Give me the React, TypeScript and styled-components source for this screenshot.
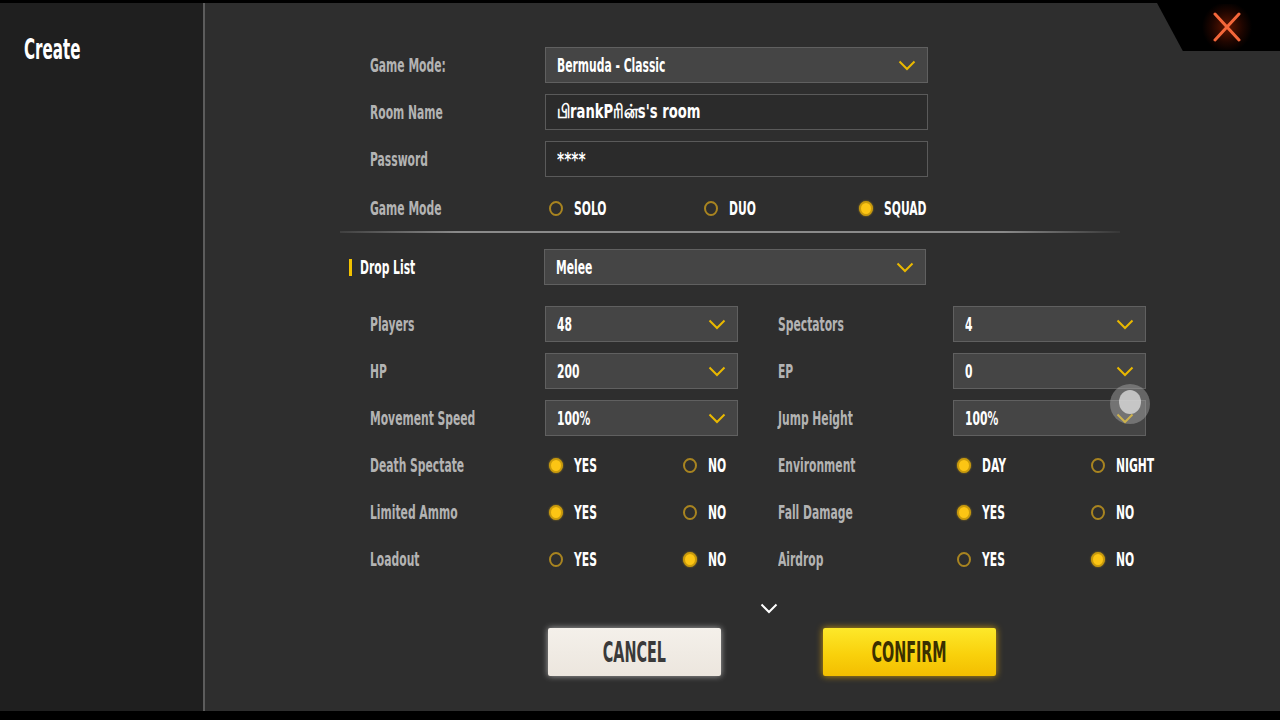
import React from "react";
import styled, { createGlobalStyle } from "styled-components";

const GlobalStyle = createGlobalStyle`
  html, body {
    margin: 0;
    padding: 0;
    background: #000;
  }
  body {
    font-family: "Liberation Sans Narrow", "DejaVu Sans Condensed", "Roboto Condensed", sans-serif;
    font-stretch: condensed;
  }
`;

// the game font is very narrow, squeeze the text horizontally
const Squeeze = styled.span<{ $scale?: number; $origin?: string }>`
  display: inline-block;
  white-space: nowrap;
  transform: scaleX(${(p) => p.$scale ?? 0.63});
  transform-origin: ${(p) => p.$origin ?? "left"} center;
`;

const Screen = styled.div`
  width: 1280px;
  height: 720px;
  box-sizing: border-box;
  padding: 3px 0 9px;
  background: #000;
  display: flex;
`;

const SideBar = styled.aside`
  width: 205px;
  flex-shrink: 0;
  background: #1f1f1f;
  border-right: 2px solid #5c5c5c;
  padding: 31px 0 0 24px;
  box-sizing: border-box;
`;

const Title = styled.h1`
  margin: 0;
  font-size: 28px;
  font-weight: 700;
  color: #fff;
  line-height: 32px;
`;

const Main = styled.main`
  position: relative;
  flex: 1;
  background: #2e2e2e;
  overflow: hidden;
`;

const Form = styled.div`
  display: flex;
  flex-direction: column;
  padding: 44px 0 0 165px;
`;

const TopStack = styled.div`
  display: flex;
  flex-direction: column;
  gap: 11px;
`;

const Row = styled.div<{ $offset?: number }>`
  display: flex;
  align-items: center;
  height: 36px;
  margin-top: ${(p) => p.$offset ?? 0}px;
`;

const Label = styled.div`
  width: 175px;
  flex-shrink: 0;
  font-size: 19px;
  font-weight: 700;
  color: #b3b3b3;
  white-space: nowrap;
`;

const DropLabel = styled.div`
  display: flex;
  align-items: center;
  gap: 8px;
  width: 195px;
  margin-left: -21px;
  font-size: 19px;
  font-weight: 700;
  color: #fff;
`;

const Marker = styled.span`
  width: 3px;
  height: 17px;
  background: #f2c200;
`;

const SelectBox = styled.div<{ $width: number }>`
  width: ${(p) => p.$width}px;
  height: 36px;
  box-sizing: border-box;
  display: flex;
  align-items: center;
  justify-content: space-between;
  padding: 0 11px;
  background: #454545;
  border: 1px solid #606060;
  color: #fff;
  font-size: 19px;
  font-weight: 700;
`;

const InputBox = styled.div`
  width: 383px;
  height: 36px;
  box-sizing: border-box;
  display: flex;
  align-items: center;
  padding: 0 11px;
  background: #2b2b2b;
  border: 1px solid #5a5a5a;
  color: #fff;
  font-size: 19px;
  font-weight: 700;
`;

const Divider = styled.div`
  width: 780px;
  height: 2px;
  margin: 5px 0 0 -30px;
  background: linear-gradient(
    90deg,
    rgba(90, 90, 90, 0.4),
    #8a8a8a 15%,
    #8a8a8a 85%,
    rgba(90, 90, 90, 0.2)
  );
`;

const Grid = styled.div`
  display: grid;
  grid-template-columns: 175px 193px 215px 193px;
  grid-auto-rows: 36px;
  row-gap: 11px;
  align-items: center;
  margin-top: 21px;
`;

const GridLabel = styled(Label)<{ $right?: boolean }>`
  width: auto;
  padding-left: ${(p) => (p.$right ? 40 : 0)}px;
`;

const Options = styled.div<{ $step: number }>`
  display: grid;
  grid-template-columns: repeat(3, ${(p) => p.$step}px);
  padding-left: 4px;
`;

const Option = styled.div`
  display: flex;
  align-items: center;
  gap: 11px;
  color: #fff;
  font-size: 19px;
  font-weight: 700;
`;

const Radio = styled.span<{ $on?: boolean }>`
  width: 14px;
  height: 15px;
  flex-shrink: 0;
  box-sizing: border-box;
  border-radius: 50%;
  border: 2px solid ${(p) => (p.$on ? "#c99a0c" : "#a88420")};
  background: ${(p) => (p.$on ? "#fcc514" : "transparent")};
  box-shadow: ${(p) => (p.$on ? "0 0 2px rgba(255, 200, 20, 0.6)" : "none")};
`;

const Footer = styled.div`
  width: 448px;
  margin: 26px 0 0 178px;
  display: flex;
  flex-direction: column;
  align-items: center;
  gap: 14px;
`;

const ScrollHint = styled.div`
  display: flex;
  margin-right: 6px;
`;

const Buttons = styled.div`
  width: 100%;
  display: flex;
  justify-content: space-between;
`;

const ActionButton = styled.button<{ $primary?: boolean }>`
  width: 173px;
  height: 48px;
  padding: 0;
  border: none;
  border-radius: 2px;
  font-family: inherit;
  font-stretch: condensed;
  font-size: 28px;
  font-weight: 700;
  color: ${(p) => (p.$primary ? "#3b3000" : "#3a3a3a")};
  background: ${(p) =>
    p.$primary
      ? "linear-gradient(180deg, #fde82a 0%, #f9d10c 55%, #f3be00 100%)"
      : "linear-gradient(180deg, #f4f0ea 0%, #ece6de 100%)"};
  box-shadow: ${(p) =>
    p.$primary
      ? "0 0 7px rgba(255, 190, 0, 0.75)"
      : "0 0 6px rgba(255, 255, 255, 0.6)"};
`;

const CloseArea = styled.div`
  position: absolute;
  top: 0;
  right: 0;
  width: 123px;
  height: 48px;
  background: #000;
  clip-path: polygon(0 0, 100% 0, 100% 100%, 21% 100%);
  display: flex;
  align-items: center;
  justify-content: flex-end;
  padding-right: 27px;
  box-sizing: border-box;
`;

const CloseGlow = styled.div`
  width: 52px;
  height: 46px;
  display: flex;
  align-items: center;
  justify-content: center;
  background: radial-gradient(circle, rgba(160, 35, 0, 0.6) 0%, rgba(100, 18, 0, 0.3) 45%, transparent 72%);
`;

const TouchMark = styled.div`
  position: absolute;
  left: 905px;
  top: 381px;
  width: 40px;
  height: 40px;
  border-radius: 50%;
  background: rgba(170, 170, 170, 0.45);
  display: flex;
  align-items: flex-start;
  justify-content: center;
  padding-top: 6px;
  box-sizing: border-box;
  &::after {
    content: "";
    width: 22px;
    height: 24px;
    border-radius: 50%;
    background: rgba(225, 225, 225, 0.75);
  }
`;

const Chevron = ({ color = "#e9b800" }: { color?: string }) => (
  <svg width="18" height="11" viewBox="0 0 18 11">
    <polyline points="1.5,1.5 9,9 16.5,1.5" fill="none" stroke={color} strokeWidth="2" />
  </svg>
);

const Select = ({ value, width }: { value: string; width: number }) => (
  <SelectBox $width={width}>
    <Squeeze>{value}</Squeeze>
    <Chevron />
  </SelectBox>
);

const RadioGroup = ({
  items,
  selected,
  step,
}: {
  items: string[];
  selected: number;
  step: number;
}) => (
  <Options $step={step}>
    {items.map((item, i) => (
      <Option key={item}>
        <Radio $on={i === selected} />
        <Squeeze>{item}</Squeeze>
      </Option>
    ))}
  </Options>
);

type Cell =
  | { label: string; select: string }
  | { label: string; options: string[]; selected: number };

const gridRows: [Cell, Cell][] = [
  [
    { label: "Players", select: "48" },
    { label: "Spectators", select: "4" },
  ],
  [
    { label: "HP", select: "200" },
    { label: "EP", select: "0" },
  ],
  [
    { label: "Movement Speed", select: "100%" },
    { label: "Jump Height", select: "100%" },
  ],
  [
    { label: "Death Spectate", options: ["YES", "NO"], selected: 0 },
    { label: "Environment", options: ["DAY", "NIGHT"], selected: 0 },
  ],
  [
    { label: "Limited Ammo", options: ["YES", "NO"], selected: 0 },
    { label: "Fall Damage", options: ["YES", "NO"], selected: 0 },
  ],
  [
    { label: "Loadout", options: ["YES", "NO"], selected: 1 },
    { label: "Airdrop", options: ["YES", "NO"], selected: 1 },
  ],
];

const renderControl = (cell: Cell) =>
  "select" in cell ? (
    <Select value={cell.select} width={193} />
  ) : (
    <RadioGroup items={cell.options} selected={cell.selected} step={134} />
  );

const App = () => {
  return (
    <>
      <GlobalStyle />
      <Screen>
        <SideBar>
          <Title>
            <Squeeze $scale={0.6}>Create</Squeeze>
          </Title>
        </SideBar>
        <Main>
          <Form>
            <TopStack>
              <Row>
                <Label>
                  <Squeeze>Game Mode:</Squeeze>
                </Label>
                <Select value="Bermuda - Classic" width={383} />
              </Row>
              <Row>
                <Label>
                  <Squeeze>Room Name</Squeeze>
                </Label>
                <InputBox>
                  <Squeeze $scale={0.77}>பிrankPரின்s's room</Squeeze>
                </InputBox>
              </Row>
              <Row>
                <Label>
                  <Squeeze>Password</Squeeze>
                </Label>
                <InputBox>
                  <Squeeze $scale={0.8}>****</Squeeze>
                </InputBox>
              </Row>
              <Row $offset={2}>
                <Label>
                  <Squeeze>Game Mode</Squeeze>
                </Label>
                <RadioGroup items={["SOLO", "DUO", "SQUAD"]} selected={2} step={155} />
              </Row>
            </TopStack>
            <Divider />
            <Row $offset={16}>
              <DropLabel>
                <Marker />
                <Squeeze>Drop List</Squeeze>
              </DropLabel>
              <Select value="Melee" width={382} />
            </Row>
            <Grid>
              {gridRows.map(([left, right]) => (
                <React.Fragment key={left.label}>
                  <GridLabel>
                    <Squeeze>{left.label}</Squeeze>
                  </GridLabel>
                  {renderControl(left)}
                  <GridLabel $right>
                    <Squeeze>{right.label}</Squeeze>
                  </GridLabel>
                  {renderControl(right)}
                </React.Fragment>
              ))}
            </Grid>
            <Footer>
              <ScrollHint>
                <Chevron color="#ffffff" />
              </ScrollHint>
              <Buttons>
                <ActionButton>
                  <Squeeze $scale={0.57} $origin="center">CANCEL</Squeeze>
                </ActionButton>
                <ActionButton $primary>
                  <Squeeze $scale={0.57} $origin="center">CONFIRM</Squeeze>
                </ActionButton>
              </Buttons>
            </Footer>
          </Form>
          <TouchMark />
          <CloseArea>
            <CloseGlow>
              <svg width="28" height="30" viewBox="0 0 28 30">
                <path d="M2 2 L26 28 M26 2 L2 28" stroke="#f4673a" strokeWidth="3" strokeLinecap="round" />
              </svg>
            </CloseGlow>
          </CloseArea>
        </Main>
      </Screen>
    </>
  );
};

export default App;
